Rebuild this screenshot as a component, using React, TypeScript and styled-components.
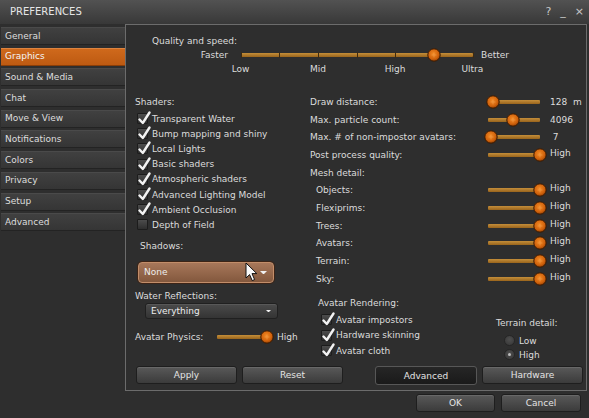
import React, { useId } from "react";
import styled, { createGlobalStyle } from "styled-components";

const GlobalStyle = createGlobalStyle`
  html, body { margin: 0; padding: 0; background: #2e2e2e; }
  body {
    font-family: "DejaVu Sans", "Liberation Sans", sans-serif;
    font-size: 9px;
    color: #dcdcdc;
  }
  * { box-sizing: border-box; }
`;

const tabs = [
  "General",
  "Graphics",
  "Sound & Media",
  "Chat",
  "Move & View",
  "Notifications",
  "Colors",
  "Privacy",
  "Setup",
  "Advanced",
];

const shaders = [
  { label: "Transparent Water", checked: true },
  { label: "Bump mapping and shiny", checked: true },
  { label: "Local Lights", checked: true },
  { label: "Basic shaders", checked: true },
  { label: "Atmospheric shaders", checked: true },
  { label: "Advanced Lighting Model", checked: true },
  { label: "Ambient Occlusion", checked: true },
  { label: "Depth of Field", checked: false },
];

const settings = [
  { label: "Draw distance:", value: 0.1, text: "128  m" },
  { label: "Max. particle count:", value: 0.48, text: "4096" },
  { label: "Max. # of non-impostor avatars:", value: 0.06, text: " 7" },
  { label: "Post process quality:", value: 1, text: "High", raised: true },
  { label: "Mesh detail:" },
  { label: "Objects:", value: 1, text: "High", raised: true, indent: true },
  { label: "Flexiprims:", value: 1, text: "High", raised: true, indent: true },
  { label: "Trees:", value: 1, text: "High", raised: true, indent: true },
  { label: "Avatars:", value: 1, text: "High", raised: true, indent: true },
  { label: "Terrain:", value: 1, text: "High", raised: true, indent: true },
  { label: "Sky:", value: 1, text: "High", raised: true, indent: true },
];

const Window = styled.div`
  width: 589px;
  height: 418px;
  background: #2e2e2e;
  display: flex;
  flex-direction: column;
  overflow: hidden;
`;

const TitleBar = styled.div`
  height: 24px;
  flex: none;
  display: flex;
  align-items: center;
  justify-content: space-between;
  padding: 0 5px 2px 10px;
  background: linear-gradient(#525252, #383838);
  color: #e6e6e6;
  font-size: 10px;
`;

const TitleIcons = styled.div`
  display: flex;
  align-items: center;
  gap: 9px;
  font-size: 11px;
  color: #c8c8c8;
`;

const Main = styled.div`
  display: flex;
  height: 367px;
  flex: none;
`;

const Sidebar = styled.div`
  width: 125px;
  flex: none;
  display: flex;
  flex-direction: column;
  gap: 2.7px;
  padding: 3px 0 0 1px;
`;

const Tab = styled.div<{ $active?: boolean }>`
  height: 18px;
  display: flex;
  align-items: center;
  padding-left: 4px;
  color: ${(p) => (p.$active ? "#f4f4f4" : "#dedede")};
  background: ${(p) =>
    p.$active
      ? "linear-gradient(#d06a1c, #bd5a12)"
      : "linear-gradient(#414141, #353535)"};
  border-bottom: 1px solid ${(p) => (p.$active ? "#8a3e08" : "#232323")};
  box-shadow: inset 0 1px 0 ${(p) => (p.$active ? "#de8440" : "#4a4a4a")};
`;

const Panel = styled.div`
  width: 462px;
  height: 367px;
  border: 1px solid #6c6c6c;
  display: flex;
  flex-direction: column;
`;

const Line = styled.div`
  height: 12px;
  line-height: 12px;
  white-space: pre;
`;

const QualityBlock = styled.div`
  padding-left: 26px;
`;

const QualityTitle = styled(Line)`
  margin-top: 10px;
`;

const QualityRow = styled.div`
  display: flex;
  align-items: center;
  height: 12px;
  margin-top: 2px;
`;

const EndLabel = styled.div<{ $w?: number; $right?: boolean; $ml?: number }>`
  width: ${(p) => (p.$w ? `${p.$w}px` : "auto")};
  margin-left: ${(p) => p.$ml ?? 0}px;
  text-align: ${(p) => (p.$right ? "right" : "left")};
  line-height: 12px;
`;

const TickLabels = styled.div`
  margin: 2px 0 0 50px;
  width: 309px;
  display: grid;
  grid-template-columns: repeat(4, 1fr);
  text-align: center;
  line-height: 12px;
`;

const Columns = styled.div`
  display: flex;
  margin-top: 18px;
`;

const LeftCol = styled.div`
  width: 175px;
  margin-left: 9px;
  display: flex;
  flex-direction: column;
`;

const RightCol = styled.div`
  flex: 1;
  display: flex;
  flex-direction: column;
`;

const SectionLabel = styled.div<{ $h: number; $indent?: number; $mt?: number }>`
  height: ${(p) => p.$h}px;
  line-height: ${(p) => p.$h}px;
  padding-left: ${(p) => p.$indent ?? 0}px;
  margin-top: ${(p) => p.$mt ?? 0}px;
`;

const CheckRow = styled.div<{ $h: number; $indent?: number }>`
  height: ${(p) => p.$h}px;
  display: flex;
  align-items: center;
  gap: 4px;
  padding-left: ${(p) => p.$indent ?? 0}px;
`;

const Box = styled.div`
  position: relative;
  width: 11px;
  height: 11px;
  flex: none;
  background: linear-gradient(#4c4c4c, #2e2e2e);
  border: 1px solid #1c1c1c;
  border-radius: 1px;
`;

const Tick = styled.svg`
  position: absolute;
  left: 0px;
  top: -3px;
`;

const DropWrap = styled.div`
  position: relative;
`;

const Dropdown = styled.div<{ $brown?: boolean; $w: number; $h: number; $ml: number; $mt: number }>`
  width: ${(p) => p.$w}px;
  height: ${(p) => p.$h}px;
  margin: ${(p) => `${p.$mt}px 0 0 ${p.$ml}px`};
  display: flex;
  align-items: center;
  justify-content: space-between;
  padding: 0 6px 0 5px;
  border-radius: ${(p) => (p.$brown ? 4 : 3)}px;
  color: #ececec;
  background: ${(p) =>
    p.$brown
      ? "linear-gradient(#a7775a, #83583d)"
      : "linear-gradient(#4b4b4b, #343434)"};
  border: 1px solid ${(p) => (p.$brown ? "#c28d69" : "#202020")};
  box-shadow: ${(p) => (p.$brown ? "0 0 0 1px #3c2417" : "inset 0 1px 0 #585858")};
`;

const Cursor = styled.svg`
  position: absolute;
  left: 110px;
  top: 10px;
`;

const SettingRow = styled.div`
  height: 17.7px;
  display: flex;
  align-items: center;
`;

const SettingLabel = styled.div<{ $indent?: boolean }>`
  width: 178px;
  flex: none;
  padding-left: ${(p) => (p.$indent ? 6 : 0)}px;
  white-space: nowrap;
`;

const ValueText = styled.div<{ $raised?: boolean }>`
  margin-left: 10px;
  white-space: pre;
  margin-bottom: ${(p) => (p.$raised ? 4 : 0)}px;
`;

const PhysicsRow = styled.div`
  display: flex;
  align-items: center;
  height: 14px;
  margin-top: 11px;
`;

const RenderingArea = styled.div`
  display: flex;
  margin-top: 9.3px;
`;

const RenderingBlock = styled.div`
  width: 186px;
  padding-left: 8px;
`;

const CheckList = styled.div`
  margin-top: 3.3px;
  padding-left: 3px;
`;

const TerrainBlock = styled.div`
  margin-top: 20px;
`;

const RadioList = styled.div`
  margin-top: 5px;
  padding-left: 8px;
`;

const RadioRow = styled.div`
  height: 14px;
  display: flex;
  align-items: center;
  gap: 4px;
`;

const Radio = styled.div<{ $on?: boolean }>`
  width: 11px;
  height: 11px;
  border-radius: 50%;
  background: radial-gradient(circle at 50% 40%, #4e4e4e, #363636);
  border: 1px solid #262626;
  display: flex;
  align-items: center;
  justify-content: center;
  &::after {
    content: "";
    width: 3px;
    height: 3px;
    border-radius: 50%;
    background: ${(p) => (p.$on ? "#bdbdbd" : "transparent")};
  }
`;

const ButtonRow = styled.div`
  margin-top: auto;
  display: flex;
  padding: 0 0 5px 10px;
`;

const Button = styled.div<{ $dark?: boolean; $w: number; $ml?: number }>`
  width: ${(p) => p.$w}px;
  height: ${(p) => (p.$dark ? 19 : 18)}px;
  margin-left: ${(p) => p.$ml ?? 0}px;
  display: flex;
  align-items: center;
  justify-content: center;
  border-radius: 3px;
  color: #e4e4e4;
  background: ${(p) =>
    p.$dark ? "linear-gradient(#262626, #1a1a1a)" : "linear-gradient(#595959, #3b3b3b)"};
  border: 1px solid ${(p) => (p.$dark ? "#575757" : "#1e1e1e")};
  box-shadow: ${(p) => (p.$dark ? "none" : "inset 0 1px 0 #686868")};
`;

const Footer = styled.div`
  display: flex;
  justify-content: flex-end;
  padding: 3px 8px 0 0;
`;

const SliderBox = styled.div<{ $w: number; $ml?: number }>`
  position: relative;
  width: ${(p) => p.$w}px;
  margin-left: ${(p) => p.$ml ?? 0}px;
  height: 14px;
  flex: none;
  display: flex;
  align-items: center;
`;

const Track = styled.div`
  width: 100%;
  height: 4px;
  border-radius: 1px;
  background: linear-gradient(#c48e3a, #99641c);
`;

const TickMark = styled.div`
  position: absolute;
  top: 4px;
  width: 1px;
  height: 6px;
  background: #3c2a12;
`;

const Thumb = styled.svg`
  position: absolute;
  top: 0px;
`;

function Slider({ w, value, ticks, ml }: { w: number; value: number; ticks?: number; ml?: number }) {
  const id = useId();
  return (
    <SliderBox $w={w} $ml={ml}>
      <Track />
      {ticks
        ? Array.from({ length: ticks }).map((_, i) => (
            <TickMark key={i} style={{ left: (i / (ticks - 1)) * w - 0.5 }} />
          ))
        : null}
      <Thumb width="14" height="14" viewBox="0 0 14 14" style={{ left: value * w - 7 }}>
        <defs>
          <radialGradient id={id} cx="45%" cy="40%" r="60%">
            <stop offset="0%" stopColor="#f38a24" />
            <stop offset="70%" stopColor="#d0620c" />
            <stop offset="100%" stopColor="#944004" />
          </radialGradient>
        </defs>
        <circle cx="7" cy="7" r="6.2" fill={`url(#${id})`} stroke="#3a1a02" strokeWidth="1" />
        <path d="M7 4.6v4.8M4.6 7h4.8" stroke="#f6a656" strokeWidth="1" opacity="0.55" />
      </Thumb>
    </SliderBox>
  );
}

function Check({ checked }: { checked: boolean }) {
  return (
    <Box>
      {checked && (
        <Tick width="13" height="14" viewBox="0 0 13 14">
          <path d="M1.5 8.5 L4.8 12 L11.5 1.5" fill="none" stroke="#f2f2f2" strokeWidth="2.4" strokeLinecap="round" strokeLinejoin="round" />
        </Tick>
      )}
    </Box>
  );
}

function Arrow({ size }: { size: number }) {
  return (
    <svg width={size * 2} height={size} viewBox="0 0 8 4">
      <path d="M0 0 H8 L4 4 Z" fill="#f0f0f0" />
    </svg>
  );
}

export default function App() {
  return (
    <>
      <GlobalStyle />
      <Window>
        <TitleBar>
          <span>PREFERENCES</span>
          <TitleIcons>
            <span>?</span>
            <span>_</span>
            <span>×</span>
          </TitleIcons>
        </TitleBar>
        <Main>
          <Sidebar>
            {tabs.map((t) => (
              <Tab key={t} $active={t === "Graphics"}>
                {t}
              </Tab>
            ))}
          </Sidebar>
          <Panel>
            <QualityBlock>
              <QualityTitle>Quality and speed:</QualityTitle>
              <QualityRow>
                <EndLabel $w={76} $right>
                  Faster
                </EndLabel>
                <Slider w={232} value={5 / 6} ticks={7} ml={13} />
                <EndLabel $ml={8}>Better</EndLabel>
              </QualityRow>
              <TickLabels>
                <span>Low</span>
                <span>Mid</span>
                <span>High</span>
                <span>Ultra</span>
              </TickLabels>
            </QualityBlock>
            <Columns>
              <LeftCol>
                <SectionLabel $h={18}>Shaders:</SectionLabel>
                {shaders.map((s) => (
                  <CheckRow key={s.label} $h={15.2} $indent={2}>
                    <Check checked={s.checked} />
                    <span>{s.label}</span>
                  </CheckRow>
                ))}
                <SectionLabel $h={12} $indent={5} $mt={7.4}>
                  Shadows:
                </SectionLabel>
                <DropWrap>
                  <Dropdown $brown $w={136} $h={21} $ml={3} $mt={10}>
                    <span>None</span>
                    <Arrow size={3.5} />
                  </Dropdown>
                  <Cursor width="13" height="20" viewBox="0 0 13 20">
                    <path d="M1 1 L1 16 L4.6 12.6 L7.2 18.6 L9.6 17.6 L7 11.6 L11.8 11.6 Z" fill="#fafafa" stroke="#111" strokeWidth="1" strokeLinejoin="round" />
                  </Cursor>
                </DropWrap>
                <SectionLabel $h={12} $indent={0} $mt={7}>
                  Water Reflections:
                </SectionLabel>
                <Dropdown $w={133} $h={16} $ml={10} $mt={1}>
                  <span>Everything</span>
                  <Arrow size={2.5} />
                </Dropdown>
                <PhysicsRow>
                  <EndLabel $w={82}>Avatar Physics:</EndLabel>
                  <Slider w={50} value={1} />
                  <ValueText>High</ValueText>
                </PhysicsRow>
              </LeftCol>
              <RightCol>
                {settings.map((s) => (
                  <SettingRow key={s.label}>
                    <SettingLabel $indent={s.indent}>{s.label}</SettingLabel>
                    {s.value !== undefined && <Slider w={52} value={s.value} />}
                    {s.text && <ValueText $raised={s.raised}>{s.text}</ValueText>}
                  </SettingRow>
                ))}
                <RenderingArea>
                  <RenderingBlock>
                    <Line>Avatar Rendering:</Line>
                    <CheckList>
                      {["Avatar impostors", "Hardware skinning", "Avatar cloth"].map((l) => (
                        <CheckRow key={l} $h={15.5}>
                          <Check checked />
                          <span>{l}</span>
                        </CheckRow>
                      ))}
                    </CheckList>
                  </RenderingBlock>
                  <TerrainBlock>
                    <Line>Terrain detail:</Line>
                    <RadioList>
                      <RadioRow>
                        <Radio />
                        <span>Low</span>
                      </RadioRow>
                      <RadioRow>
                        <Radio $on />
                        <span>High</span>
                      </RadioRow>
                    </RadioList>
                  </TerrainBlock>
                </RenderingArea>
              </RightCol>
            </Columns>
            <ButtonRow>
              <Button $w={101}>Apply</Button>
              <Button $w={101} $ml={5}>
                Reset
              </Button>
              <Button $w={102} $ml={32} $dark>
                Advanced
              </Button>
              <Button $w={101} $ml={5}>
                Hardware
              </Button>
            </ButtonRow>
          </Panel>
        </Main>
        <Footer>
          <Button $w={79}>OK</Button>
          <Button $w={80} $ml={6}>
            Cancel
          </Button>
        </Footer>
      </Window>
    </>
  );
}
